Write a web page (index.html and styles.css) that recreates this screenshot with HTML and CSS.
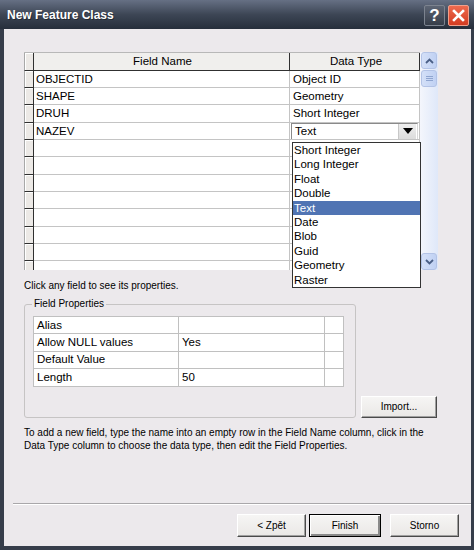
FILE: index.html
```html
<!DOCTYPE html>
<html lang="en">
<head>
    <meta charset="UTF-8">
    <meta name="viewport" content="width=device-width, initial-scale=1.0">
    <title>New Feature Class</title>
    <link rel="stylesheet" href="styles.css">
</head>
<body>
    <div class="window">
        <div class="titlebar">
            <span class="title">New Feature Class</span>
            <div class="caption-buttons">
                <span class="cap-btn help">?</span>
                <span class="cap-btn close">
                    <svg width="13" height="13" viewBox="0 0 13 13"><path d="M2 2 L11 11 M11 2 L2 11" stroke="#fff" stroke-width="2.6" stroke-linecap="square"/></svg>
                </span>
            </div>
        </div>

        <div class="client">
            <div class="content">
                <!-- Fields grid -->
                <div class="grid-wrap">
                    <div class="grid">
                        <div class="row head">
                            <div class="rh"></div>
                            <div class="cell name">Field Name</div>
                            <div class="cell type">Data Type</div>
                        </div>
                        <div class="row">
                            <div class="rh"></div>
                            <div class="cell name">OBJECTID</div>
                            <div class="cell type">Object ID</div>
                        </div>
                        <div class="row">
                            <div class="rh"></div>
                            <div class="cell name">SHAPE</div>
                            <div class="cell type">Geometry</div>
                        </div>
                        <div class="row">
                            <div class="rh"></div>
                            <div class="cell name">DRUH</div>
                            <div class="cell type">Short Integer</div>
                        </div>
                        <div class="row">
                            <div class="rh"></div>
                            <div class="cell name">NAZEV</div>
                            <div class="cell type editing">
                                <div class="combo">
                                    <span>Text</span>
                                    <span class="combo-btn"><span class="arrow"></span></span>
                                </div>
                            </div>
                        </div>
                        <div class="row"><div class="rh"></div><div class="cell name"></div><div class="cell type"></div></div>
                        <div class="row"><div class="rh"></div><div class="cell name"></div><div class="cell type"></div></div>
                        <div class="row"><div class="rh"></div><div class="cell name"></div><div class="cell type"></div></div>
                        <div class="row"><div class="rh"></div><div class="cell name"></div><div class="cell type"></div></div>
                        <div class="row"><div class="rh"></div><div class="cell name"></div><div class="cell type"></div></div>
                        <div class="row"><div class="rh"></div><div class="cell name"></div><div class="cell type"></div></div>
                        <div class="row"><div class="rh"></div><div class="cell name"></div><div class="cell type"></div></div>
                        <div class="row"><div class="rh"></div><div class="cell name"></div><div class="cell type"></div></div>
                    </div>

                    <div class="vscroll">
                        <div class="sb-btn">
                            <svg width="9" height="6" viewBox="0 0 9 6"><path d="M1 5 L4.5 1.5 L8 5" fill="none" stroke="#4a5f86" stroke-width="1.8"/></svg>
                        </div>
                        <div class="sb-thumb">
                            <span></span><span></span><span></span>
                        </div>
                        <div class="sb-track"></div>
                        <div class="sb-btn">
                            <svg width="9" height="6" viewBox="0 0 9 6"><path d="M1 1 L4.5 4.5 L8 1" fill="none" stroke="#4a5f86" stroke-width="1.8"/></svg>
                        </div>
                    </div>

                    <!-- Data type dropdown -->
                    <ul class="dropdown">
                        <li>Short Integer</li>
                        <li>Long Integer</li>
                        <li>Float</li>
                        <li>Double</li>
                        <li class="selected">Text</li>
                        <li>Date</li>
                        <li>Blob</li>
                        <li>Guid</li>
                        <li>Geometry</li>
                        <li>Raster</li>
                    </ul>
                </div>

                <p class="hint">Click any field to see its properties.</p>

                <div class="props-row">
                    <fieldset class="props">
                        <legend>Field Properties</legend>
                        <table class="props-table">
                            <tr><td>Alias</td><td></td><td></td></tr>
                            <tr><td>Allow NULL values</td><td>Yes</td><td></td></tr>
                            <tr><td>Default Value</td><td></td><td></td></tr>
                            <tr><td>Length</td><td>50</td><td></td></tr>
                        </table>
                    </fieldset>
                    <button class="btn import">Import...</button>
                </div>

                <p class="help">To add a new field, type the name into an empty row in the Field Name column, click in the<br>Data Type column to choose the data type, then edit the Field Properties.</p>
            </div>

            <div class="footer">
                <div class="separator"></div>
                <div class="buttons">
                    <button class="btn back">&lt; Zpět</button>
                    <button class="btn finish">Finish</button>
                    <button class="btn cancel">Storno</button>
                </div>
            </div>
        </div>
    </div>
</body>
</html>
```

FILE: styles.css
```css
/* Page */
body {
    margin: 0;
    font-family: "Liberation Sans", Arial, sans-serif;
    background: #363d4a;
}

/* Window frame */
.window {
    width: 474px;
    height: 550px;
    display: flex;
    flex-direction: column;
    background: #363d4a;
}

.titlebar {
    height: 29px;
    flex: none;
    display: flex;
    align-items: center;
    justify-content: space-between;
    padding: 1px 5px 0 7px;
    box-sizing: border-box;
    background: linear-gradient(#667084, #3d4655 50%, #262e3b);
}

.title {
    color: #fff;
    font-weight: bold;
    font-size: 12px;
    text-shadow: 1px 1px 0 rgba(0, 0, 0, 0.35);
}

.caption-buttons {
    display: flex;
    gap: 3px;
}

.cap-btn {
    width: 21px;
    height: 21px;
    box-sizing: border-box;
    display: flex;
    align-items: center;
    justify-content: center;
    border-radius: 2px;
}

.help {
    font-size: 10px;
    line-height: 13px;
    margin: 8px 0 0;
}

.cap-btn.help {
    margin: 0;
    background: linear-gradient(#5d6574, #363d49);
    border: 1px solid #7c838f;
    color: #fff;
    font-weight: bold;
    font-size: 17px;
    line-height: 19px;
}

.cap-btn.close {
    background: linear-gradient(#ee6a4e, #d33c22);
    border: 1px solid #f0a08c;
}

/* Client area */
.client {
    flex: 1;
    margin: 0 3px 4px 4px;
    background: #ece9ec;
    display: flex;
    flex-direction: column;
    font-size: 10px;
    color: #000;
}

.content {
    padding: 23px 0 0 20px;
}

/* Fields grid */
.grid-wrap {
    position: relative;
    display: flex;
    width: 414px;
    height: 218px;
}

.grid {
    width: 396px;
    height: 218px;
    overflow: hidden;
    background: #fff;
    border-top: 1px solid #b8b8b8;
    box-sizing: border-box;
}

.row {
    display: grid;
    grid-template-columns: 10px 256px 130px;
    height: 17.35px;
    font-size: 11.5px;
}

.row.head {
    height: 17.7px;
}

.rh {
    background: #ece9e6;
    border-left: 1px solid #a8a8a8;
    border-right: 1px solid #303030;
    border-bottom: 1px solid #303030;
    box-shadow: inset 1px 1px 0 #fff;
    box-sizing: border-box;
}

.cell {
    border-bottom: 1px solid #c4c4c4;
    padding: 0 0 0 2px;
    line-height: 16px;
    white-space: nowrap;
    box-sizing: border-box;
}

.cell.name {
    border-right: 1px solid #c4c4c4;
}

.cell.type {
    border-right: 1px solid #c4c4c4;
    padding-left: 3px;
}

.head .cell {
    background: #f0efed;
    text-align: center;
    border-bottom: 1px solid #303030;
    border-right: 1px solid #303030;
    line-height: 16.5px;
}

.head .rh {
    border-bottom-color: #303030;
}

.cell.editing {
    padding: 0 1px 0 1px;
}

.combo {
    height: 100%;
    display: flex;
    justify-content: space-between;
    border: 1px solid #8a8a8a;
    border-right-color: #d8d8d8;
    border-bottom: none;
    box-sizing: border-box;
    padding: 0 1px 0 3px;
    line-height: 15px;
}

.combo-btn {
    width: 17px;
    height: 15px;
    margin-top: 0px;
    background: linear-gradient(#eeeeee, #dcdcdc);
    border-left: 1px solid #c8c8c8;
    display: flex;
    align-items: center;
    justify-content: center;
}

.arrow {
    width: 0;
    height: 0;
    border-left: 5px solid transparent;
    border-right: 5px solid transparent;
    border-top: 6px solid #000;
}

/* Scrollbar */
.vscroll {
    width: 18px;
    padding: 0 1px;
    box-sizing: border-box;
    display: flex;
    flex-direction: column;
    background: linear-gradient(to right, #f4f6fc, #dfe8f9);
}

.sb-btn,
.sb-thumb {
    height: 17px;
    flex: none;
    border: 1px solid #b3c3e6;
    border-radius: 3px;
    box-sizing: border-box;
    background: linear-gradient(to right, #d4e0f8, #c0d1f3);
    display: flex;
    align-items: center;
    justify-content: center;
}

.sb-thumb {
    margin-top: 1px;
    flex-direction: column;
    gap: 1px;
}

.sb-thumb span {
    width: 7px;
    height: 1px;
    background: #8fa5d0;
}

.sb-track {
    flex: 1;
}

/* Dropdown */
.dropdown {
    position: absolute;
    top: 90px;
    left: 268px;
    width: 127px;
    margin: 0;
    padding: 0;
    list-style: none;
    background: #fff;
    border: 1px solid #333;
    font-size: 11.5px;
}

.dropdown li {
    height: 14.4px;
    line-height: 14.4px;
    padding-left: 1px;
}

.dropdown li.selected {
    background: #5074b3;
    color: #fff;
}

/* Texts */
.hint {
    margin: 10px 0 0;
    line-height: 12px;
}

/* Field properties */
.props-row {
    display: flex;
    align-items: flex-end;
    gap: 5px;
    margin-top: 6px;
}

.props {
    width: 332px;
    margin: 0;
    padding: 6px 0 30px 8px;
    border: 1px solid #c6c4c4;
    border-radius: 3px;
    box-sizing: border-box;
    min-inline-size: 0;
}

.props legend {
    padding: 0 2px;
    margin-left: -1px;
    font-size: 10px;
    line-height: 12px;
}

.props-table {
    border-collapse: collapse;
    table-layout: fixed;
    width: 311px;
    background: #fff;
    font-size: 11.5px;
}

.props-table td {
    border: 1px solid #c0c0c0;
    height: 17.4px;
    padding: 0 3px;
    line-height: 15px;
    box-sizing: border-box;
}

.props-table td:nth-child(1) {
    width: 145px;
}

.props-table td:nth-child(2) {
    width: 146px;
}

/* Buttons */
.btn {
    height: 23px;
    padding: 0;
    font-family: "Liberation Sans", Arial, sans-serif;
    font-size: 10px;
    color: #000;
    background: linear-gradient(#f6f5f4, #eae8e6);
    border: 1px solid;
    border-color: #ffffff #4a4a4a #4a4a4a #ffffff;
    box-shadow: inset -1px -1px 0 #a0a0a0;
}

.btn.import {
    width: 76px;
    height: 22px;
    margin-bottom: 0;
}

/* Footer */
.footer {
    margin-top: auto;
    padding: 0 0 9px 9px;
}

.separator {
    border-top: 1px solid #a9a7aa;
    border-bottom: 1px solid #fff;
}

.buttons {
    display: flex;
    justify-content: flex-end;
    padding-right: 12px;
    margin-top: 9px;
}

.btn.back {
    width: 69px;
}

.btn.finish {
    width: 72px;
    margin-left: 3px;
    outline: 1px solid #000;
    outline-offset: -1px;
    border-color: #000;
    box-shadow: inset 1px 1px 0 #fff, inset -2px -2px 0 #8a8a8a;
}

.btn.cancel {
    width: 69px;
    margin-left: 9px;
}
```
